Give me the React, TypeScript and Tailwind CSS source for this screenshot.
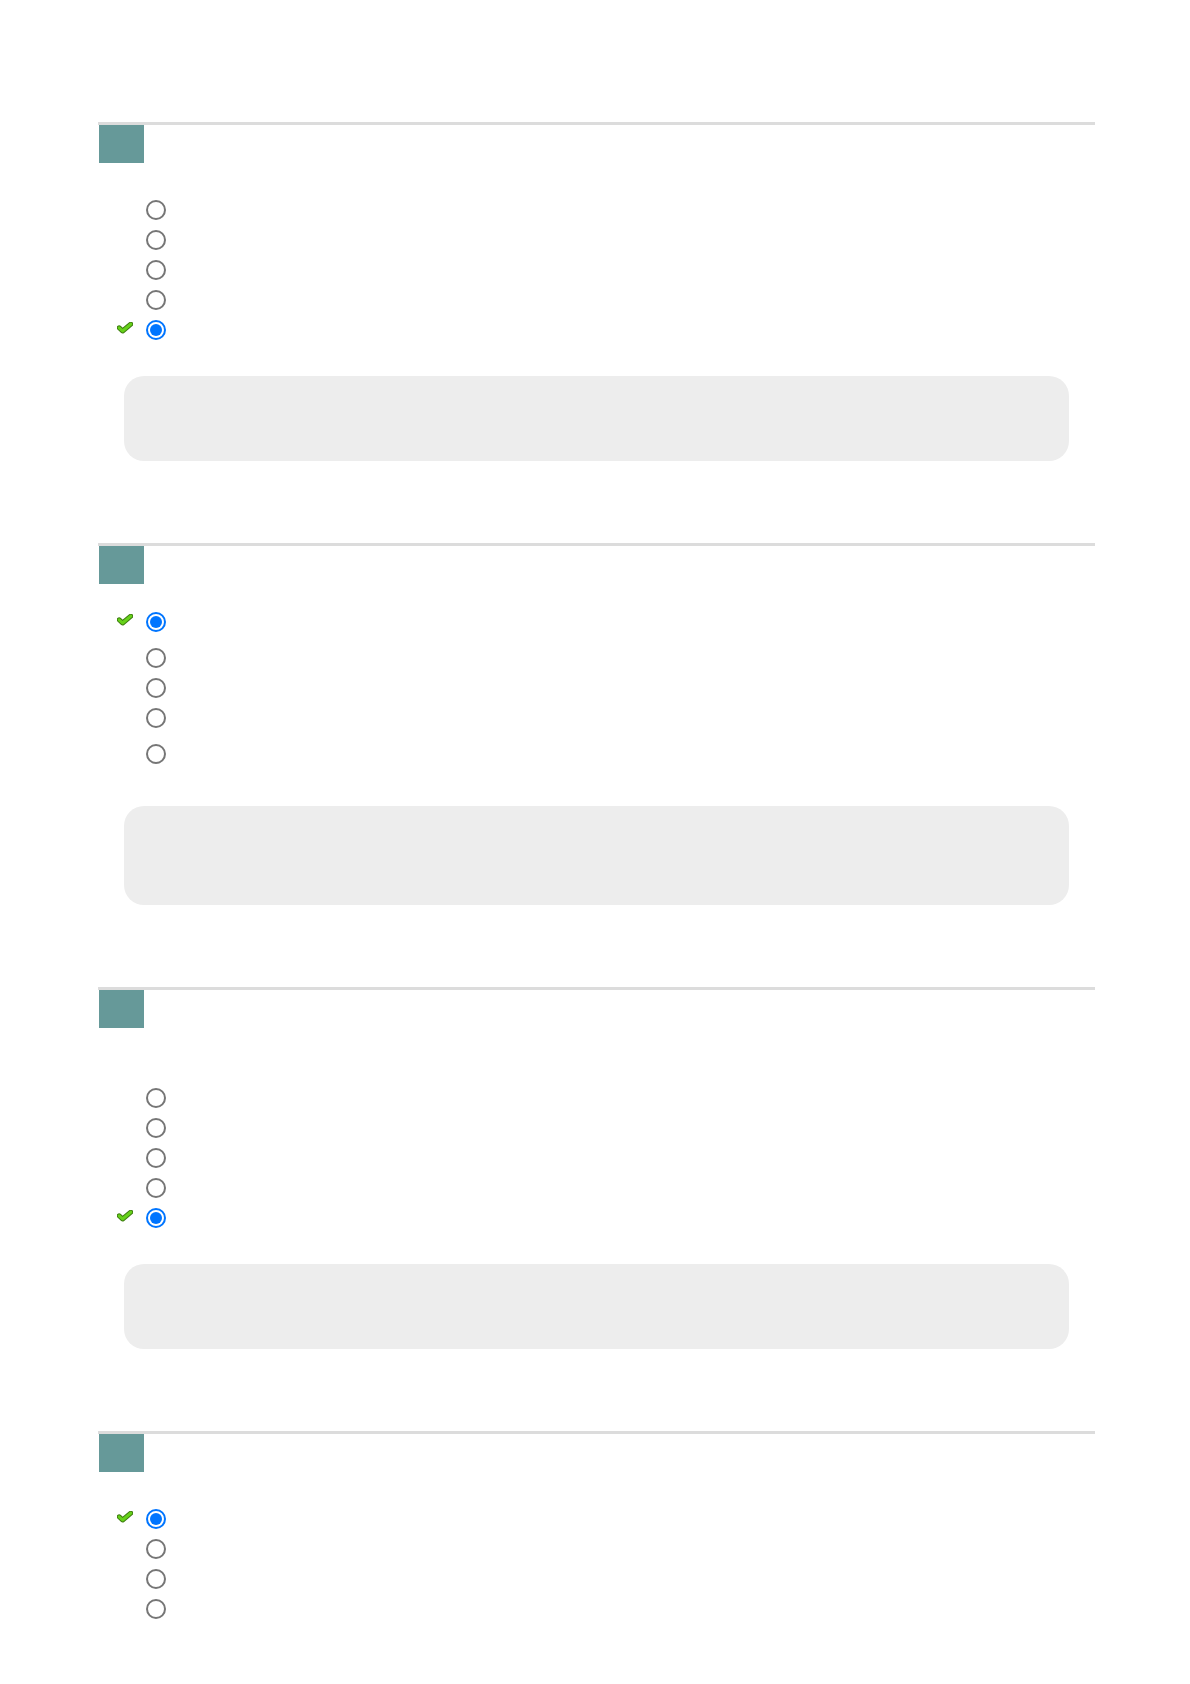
import React from 'react';

type Question = {
  options: number;
  correct: number;
  topGap: string;
  boxHeight: string;
  boxGap: string;
  spaced?: number[];
};

const questions: Question[] = [
  { options: 5, correct: 4, topGap: 'mt-[32px]', boxHeight: 'h-[85px]', boxGap: 'mt-[31px]' },
  { options: 5, correct: 0, topGap: 'mt-[23px]', boxHeight: 'h-[99px]', boxGap: 'mt-[37px]', spaced: [1, 4] },
  { options: 5, correct: 4, topGap: 'mt-[55px]', boxHeight: 'h-[85px]', boxGap: 'mt-[31px]' },
  { options: 4, correct: 0, topGap: 'mt-[32px]', boxHeight: '', boxGap: '' },
];

const Check: React.FC = () => (
  <svg width="16" height="12" viewBox="0 0 16 12">
    <polyline points="2.2,5.8 5.6,9 13.8,2.2" fill="none" stroke="#3d7a10" strokeWidth="5" strokeLinecap="round" strokeLinejoin="round" />
    <polyline points="2.2,5.8 5.6,9 13.8,2.2" fill="none" stroke="#66d11a" strokeWidth="3" strokeLinecap="round" strokeLinejoin="round" />
  </svg>
);

const Radio: React.FC<{ checked: boolean }> = ({ checked }) =>
  checked ? (
    <div className="w-[20px] h-[20px] rounded-full border-2 border-[#0075ff] bg-white flex items-center justify-center">
      <div className="w-[12px] h-[12px] rounded-full bg-[#0075ff]" />
    </div>
  ) : (
    <div className="w-[20px] h-[20px] rounded-full border-2 border-[#767676] bg-white" />
  );

const App: React.FC = () => {
  return (
    <div className="min-h-[1684px] bg-white pt-[122px]" style={{ fontFamily: '"Liberation Sans", Arial, sans-serif' }}>
      <div className="ml-[98px] w-[997px]">
        {questions.map((q, qi) => (
          <section key={qi} className={qi > 0 ? 'mt-[82px]' : ''}>
            <div className="h-[3px] bg-[#dcdcdc]" />
            <div className="ml-px w-[45px] h-[38px] bg-[#669999]" />

            <div className={q.topGap}>
              {Array.from({ length: q.options }).map((_, oi) => (
                <div
                  key={oi}
                  className={`h-[30px] flex items-center pl-[19px] ${q.spaced && q.spaced.includes(oi) ? 'mt-[6px]' : ''}`}
                >
                  <div className="w-[16px] h-[12px] -mt-[4px]">{oi === q.correct && <Check />}</div>
                  <div className="ml-[13px]">
                    <Radio checked={oi === q.correct} />
                  </div>
                </div>
              ))}
            </div>

            {q.boxHeight && (
              <div className={`${q.boxGap} ${q.boxHeight} ml-[26px] w-[945px] rounded-[20px] bg-[#ededed]`} />
            )}
          </section>
        ))}
      </div>
    </div>
  );
};

export default App;
